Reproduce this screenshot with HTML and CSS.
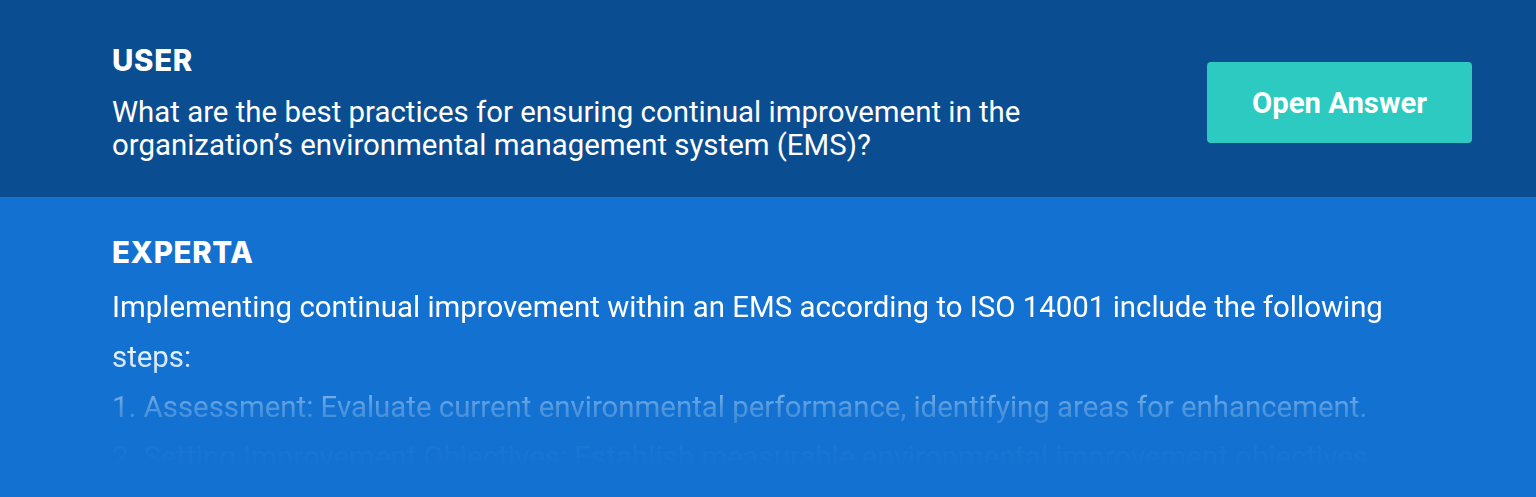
FILE: index.html
```html
<!DOCTYPE html>
<html lang="en">
<head>
<meta charset="utf-8">
<title>Q&amp;A</title>
<link rel="stylesheet" href="styles.css">
</head>
<body>
  <section class="question">
    <div class="question-text">
      <h2 class="label">USER</h2>
      <p class="question-body">What are the best practices for ensuring continual improvement in the organization’s environmental management system (EMS)?</p>
    </div>
    <button class="open-btn" type="button">Open Answer</button>
  </section>
  <section class="answer">
    <h2 class="label">EXPERTA</h2>
    <div class="answer-body">
      <p class="line">Implementing continual improvement within an EMS according to ISO 14001 include the following steps:</p>
      <p class="line">1. Assessment: Evaluate current environmental performance, identifying areas for enhancement.</p>
      <p class="line">2. Setting Improvement Objectives: Establish measurable environmental improvement objectives.</p>
    </div>
  </section>
</body>
</html>
```

FILE: styles.css
```css
* { box-sizing: border-box; }
html, body { margin: 0; padding: 0; }
body {
  width: 1536px;
  height: 497px;
  overflow: hidden;
  font-family: Roboto, "Liberation Sans", sans-serif;
  color: #ffffff;
  background: #1271d1;
}
.question {
  height: 197px;
  background: #0b4d91;
  display: flex;
  align-items: flex-start;
  justify-content: space-between;
  padding: 43px 64px 0 112px;
}
.question-text {
  width: 960px;
}
.label {
  margin: 0;
  font-family: Inter, "Open Sans", sans-serif;
  font-weight: 800;
  font-size: 29.4px;
  line-height: 36px;
  letter-spacing: 0.7px;
}
.question-body {
  margin: 16.5px 0 0;
  font-size: 29.4px;
  line-height: 33px;
  font-weight: 400;
}
.open-btn {
  margin-top: 19px;
  width: 265px;
  height: 81px;
  border: none;
  border-radius: 4px;
  background: #2ccac0;
  color: #ffffff;
  font-family: Roboto, "Liberation Sans", sans-serif;
  font-weight: 700;
  font-size: 29.3px;
  cursor: pointer;
}
.answer {
  padding: 38px 64px 0 112px;
}
.answer-body {
  margin-top: 11px;
  width: 1300px;
  font-size: 29.4px;
  line-height: 50px;
  -webkit-mask-image: linear-gradient(to bottom, #000 0, #000 55px, rgba(0,0,0,0.8) 85px, rgba(0,0,0,0.28) 125px, rgba(0,0,0,0.04) 165px, transparent 190px);
  mask-image: linear-gradient(to bottom, #000 0, #000 55px, rgba(0,0,0,0.8) 85px, rgba(0,0,0,0.28) 125px, rgba(0,0,0,0.04) 165px, transparent 190px);
}
.line {
  margin: 0;
}
```
